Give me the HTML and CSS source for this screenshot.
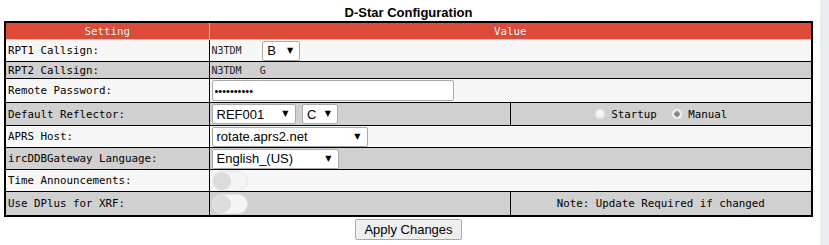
FILE: index.html
```html
<!DOCTYPE html>
<html lang="en">
<head>
  <meta charset="UTF-8">
  <title>D-Star Configuration</title>
  <link rel="stylesheet" href="styles.css">
</head>
<body>
  <div class="page">
    <div class="content">
      <h2 class="title">D-Star Configuration</h2>
      <form class="config-form">
        <table class="config">
          <colgroup>
            <col class="col-setting">
            <col class="col-value">
            <col>
          </colgroup>
          <tr class="head">
            <th>Setting</th>
            <th colspan="2">Value</th>
          </tr>
          <tr class="row-light h22">
            <td>RPT1 Callsign:</td>
            <td colspan="2"><span class="call">N3TDM</span>
              <span class="select-wrap"><select class="sel sel-band">
                <option>B</option>
              </select></span>
            </td>
          </tr>
          <tr class="row-dark h17">
            <td>RPT2 Callsign:</td>
            <td colspan="2"><span class="call">N3TDM&nbsp;&nbsp;&nbsp;G</span></td>
          </tr>
          <tr class="row-light h24">
            <td>Remote Password:</td>
            <td colspan="2"><input type="password" class="pass" value="xxxxxxxxxx"></td>
          </tr>
          <tr class="row-dark h23">
            <td>Default Reflector:</td>
            <td>
              <span class="select-wrap"><select class="sel sel-ref"><option>REF001</option></select></span>
              <span class="select-wrap"><select class="sel sel-mod"><option>C</option></select></span>
            </td>
            <td class="center">
              <label class="radio"><input type="radio" name="refmode">Startup</label>
              <label class="radio"><input type="radio" name="refmode" checked>Manual</label>
            </td>
          </tr>
          <tr class="row-light h22">
            <td>APRS Host:</td>
            <td colspan="2"><span class="select-wrap"><select class="sel sel-aprs"><option>rotate.aprs2.net</option></select></span></td>
          </tr>
          <tr class="row-dark h22">
            <td>ircDDBGateway Language:</td>
            <td colspan="2"><span class="select-wrap"><select class="sel sel-lang"><option>English_(US)</option></select></span></td>
          </tr>
          <tr class="row-light h22">
            <td>Time Announcements:</td>
            <td colspan="2"><span class="toggle"><span class="knob"></span></span></td>
          </tr>
          <tr class="row-dark h24">
            <td>Use DPlus for XRF:</td>
            <td><span class="toggle"><span class="knob"></span></span></td>
            <td class="center">Note: Update Required if changed</td>
          </tr>
        </table>
        <div class="actions">
          <button type="button" class="apply">Apply Changes</button>
        </div>
      </form>
    </div>
    <div class="side"></div>
  </div>
</body>
</html>
```

FILE: styles.css
```css
body {
  margin: 0;
  padding: 0;
  background-color: #fff;
  font-family: "DejaVu Sans Mono", monospace;
  color: #000;
}

.page {
  display: flex;
  height: 245px;
}

.content {
  width: 820px;
  padding: 0 7px 0 4px;
  box-sizing: border-box;
}

.side {
  flex: 1;
  background-color: #eaeef3;
}

.title {
  font-family: "Liberation Sans", Arial, sans-serif;
  font-size: 13px;
  font-weight: bold;
  text-align: center;
  margin: 0;
  padding: 5px 0 0 0;
  height: 16px;
  line-height: 16px;
}

.config {
  width: 100%;
  border-collapse: collapse;
  table-layout: fixed;
  border: 2px solid #000;
  font-size: 10.8px;
}

.col-setting {
  width: 204px;
}

.col-value {
  width: 301px;
}

.config th {
  background-color: #dd4b39;
  color: #fff;
  font-weight: normal;
  height: 16px;
  padding: 0;
  border: 1px solid #e9c3bd;
  text-shadow: 0 0 1px rgba(0, 0, 0, 0.3);
}

.config td {
  border: 1px solid #000;
  padding: 0 2px;
  white-space: nowrap;
}

.row-light td {
  background-color: #f7f7f7;
}

.row-dark td {
  background-color: #d0d0d0;
}

.h17 td { height: 16px; }
.h22 td { height: 21px; }
.h23 td { height: 22px; }
.h24 td { height: 23px; }

.center {
  text-align: center;
}

.call {
  font-size: 10px;
  color: #222;
  margin-right: 14px;
}

/* selects with the small black arrow */
.select-wrap {
  position: relative;
  display: inline-block;
  vertical-align: middle;
}

.select-wrap::after {
  content: "\25BC";
  position: absolute;
  right: 7px;
  top: 5px;
  font-family: "DejaVu Sans", sans-serif;
  font-size: 8px;
  line-height: 10px;
  color: #000;
  pointer-events: none;
}

.sel {
  -webkit-appearance: none;
  appearance: none;
  font-family: "Liberation Sans", Arial, sans-serif;
  font-size: 13px;
  height: 20px;
  background-color: #fff;
  border: 1px solid #a9a9a9;
  border-radius: 2px;
  padding: 0 0 0 4px;
  margin: 0;
  color: #000;
  display: block;
}

.sel-band { width: 38px; }
.sel-ref { width: 84px; }
.sel-mod { width: 36px; }
.sel-aprs { width: 156px; }
.sel-lang { width: 127px; }

.pass {
  width: 242px;
  height: 21px;
  box-sizing: border-box;
  border: 1px solid #a9a9a9;
  border-radius: 2px;
  margin: 0;
  padding: 0 2px;
  font-size: 11px;
  vertical-align: middle;
}

.radio {
  margin: 0 4px;
}

.radio input {
  -webkit-appearance: none;
  appearance: none;
  width: 12px;
  height: 12px;
  margin: 0 5px 0 0;
  border: 1px solid #d0d0d0;
  border-radius: 50%;
  background: radial-gradient(circle at 50% 40%, #fafafa, #e4e4e4);
  vertical-align: -2px;
  box-sizing: border-box;
}

.radio input:checked {
  background: radial-gradient(circle, #8a8a8a 0, #8a8a8a 2.5px, #ececec 3px, #f4f4f4);
}

.toggle {
  display: inline-block;
  width: 34px;
  height: 18px;
  border: 1px solid #e6e6e6;
  border-radius: 10px;
  background-color: #f4f4f4;
  vertical-align: middle;
  position: relative;
}

.knob {
  position: absolute;
  left: 0;
  top: 0;
  width: 18px;
  height: 18px;
  border-radius: 50%;
  background-color: #dcdcdc;
}

.actions {
  text-align: center;
  padding-top: 2px;
}

.apply {
  font-family: "Liberation Sans", Arial, sans-serif;
  font-size: 13px;
  width: 107px;
  height: 21px;
  padding: 0;
  border: 1px solid #a9a9a9;
  border-radius: 2px;
  background-color: #efefef;
  color: #000;
}
```
